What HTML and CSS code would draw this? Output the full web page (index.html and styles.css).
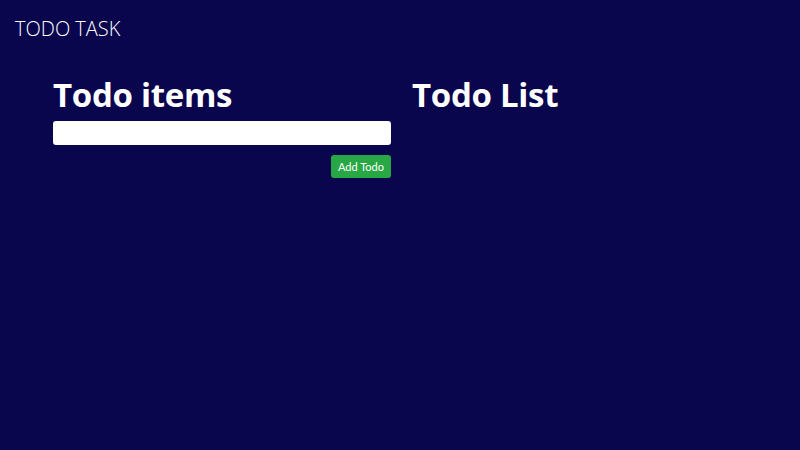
FILE: index.html
```html
<!DOCTYPE html>
<html lang="en">
<head>
<meta charset="utf-8">
<title>Todo</title>
<link rel="stylesheet" href="styles.css">
</head>
<body>
<header class="navbar"><span class="brand">TODO TASK</span></header>
<main class="board">
  <section class="col">
    <h1 class="title">Todo items</h1>
    <input class="todo-input" type="text">
    <div class="actions"><button class="btn-add">Add Todo</button></div>
  </section>
  <section class="col">
    <h1 class="title">Todo List</h1>
  </section>
</main>
</body>
</html>
```
FILE: styles.css
```css
html, body {
  margin: 0;
  padding: 0;
  height: 100%;
}
body {
  background: #0a064e;
  color: #fff;
  font-family: "Open Sans", "Noto Sans", sans-serif;
}
.navbar {
  padding: 15px 15px 0 15px;
  height: 40px;
  box-sizing: border-box;
}
.brand {
  font-size: 20px;
  font-weight: 300;
  line-height: 28px;
  display: block;
}
.board {
  display: grid;
  grid-template-columns: 338px 338px;
  column-gap: 21px;
  padding: 32px 0 0 53px;
}
.title {
  margin: 0 0 3px 0;
  font-size: 33px;
  font-weight: 700;
  line-height: 46px;
  letter-spacing: -0.3px;
}
.todo-input {
  display: block;
  box-sizing: border-box;
  width: 100%;
  height: 24px;
  border: none;
  border-radius: 3px;
  background: #fff;
  margin: 0;
}
.actions {
  display: flex;
  justify-content: flex-end;
  margin-top: 10px;
}
.btn-add {
  width: 60px;
  height: 23px;
  border: none;
  border-radius: 3px;
  background: #28a745;
  color: #fff;
  font-family: "Lato", sans-serif;
  font-size: 11px;
  padding: 0;
}
```
